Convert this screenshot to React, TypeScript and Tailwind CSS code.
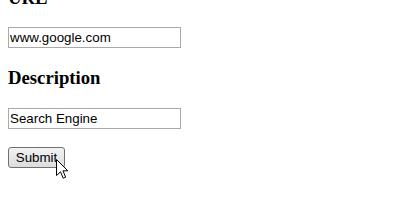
import React from 'react';

function Cursor() {
  return (
    <svg
      width="13"
      height="21"
      viewBox="0 0 13 21"
      className="absolute left-[56px] top-[159px]"
    >
      <path
        d="M0.5 0.5 L0.5 16.5 L4.5 12.8 L7.2 19.2 L9.6 18.2 L7 11.8 L11.8 11.8 Z"
        fill="#ffffff"
        stroke="#000000"
        strokeWidth="1"
        strokeLinejoin="miter"
      />
    </svg>
  );
}

export default function App() {
  return (
    <div className="relative w-[420px] h-[220px] overflow-hidden bg-white">
      <div className="flex flex-col items-start px-2">
        <h3 className="-mt-[13px] text-[18.72px] leading-[22px] font-bold text-black font-['Liberation_Serif',serif]">
          URL
        </h3>
        <input
          defaultValue="www.google.com"
          className="mt-[18px] w-[173px] h-[21px] border border-[#a9a9a9] px-[1px] text-[13.33px] text-black font-['Liberation_Sans',Arial,sans-serif] outline-none"
        />
        <h3 className="mt-[19px] text-[18.72px] leading-[22px] font-bold text-black font-['Liberation_Serif',serif]">
          Description
        </h3>
        <input
          defaultValue="Search Engine"
          className="mt-[19px] w-[173px] h-[21px] border border-[#a9a9a9] px-[1px] text-[13.33px] text-black font-['Liberation_Sans',Arial,sans-serif] outline-none"
        />
        <button className="mt-[18px] w-[57px] h-[21px] rounded-[3px] border border-[#707070] bg-gradient-to-b from-[#f2f2f2] to-[#dddddd] text-[13.33px] text-black font-['Liberation_Sans',Arial,sans-serif] leading-none">
          Submit
        </button>
      </div>
      <Cursor />
    </div>
  );
}
